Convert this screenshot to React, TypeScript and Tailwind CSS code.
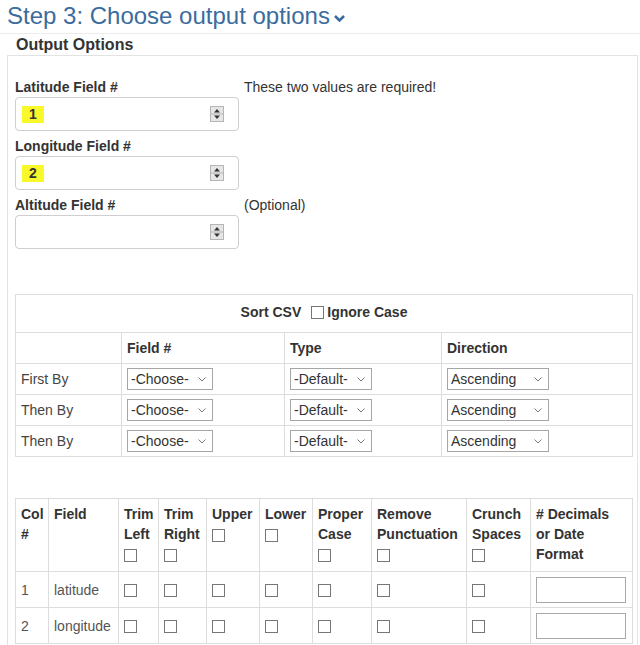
import React from "react";

function Spinner() {
  return (
    <svg width="14" height="16" viewBox="0 0 14 16" className="block">
      <rect x="0.5" y="0.5" width="13" height="15" fill="#e6e6e6" stroke="#b5b5b5" />
      <line x1="1" y1="8" x2="13" y2="8" stroke="#b5b5b5" />
      <polygon points="7,3 10,6.5 4,6.5" fill="#333" />
      <polygon points="7,13 10,9.5 4,9.5" fill="#333" />
    </svg>
  );
}

function NumField({ value }: { value?: string }) {
  return (
    <div className="flex items-center w-[224px] h-[34px] border border-[#cfcfcf] rounded-[4px] bg-white pl-[6px] pr-[14px]">
      <div className="flex-1">
        {value && (
          <span className="inline-block bg-[#f8f82a] px-[7px] leading-[17px] text-[14px] font-bold text-[#333]">
            {value}
          </span>
        )}
      </div>
      <Spinner />
    </div>
  );
}

function Box() {
  return <input type="checkbox" className="appearance-none inline-block align-middle w-[13px] h-[13px] border border-[#767676] bg-white rounded-none m-0" />;
}

function Select({ label, w }: { label: string; w: string }) {
  return (
    <div className={`flex items-center h-[22px] border border-[#a6a6a6] bg-white pl-[3px] pr-[6px] text-[14px] text-[#333] ${w}`}>
      <span className="flex-1 leading-[20px]">{label}</span>
      <svg width="8" height="5" viewBox="0 0 8 5">
        <polyline points="0.5,0.5 4,4 7.5,0.5" fill="none" stroke="#777" strokeWidth="1" />
      </svg>
    </div>
  );
}

const sortRows = ["First By", "Then By", "Then By"];

export default function App() {
  return (
    <div className="w-[640px] h-[645px] overflow-hidden bg-white font-['Liberation_Sans',Arial,sans-serif] text-[14px] text-[#333]">
      <div className="flex items-center pt-[3px] pb-[4px] pl-[7px] border-b border-[#ececec]">
        <span className="text-[24px] leading-[26px] text-[#3b6c9d]">Step 3: Choose output options</span>
        <svg width="13" height="9" viewBox="0 0 13 9" className="ml-[3px] mt-[5px]">
          <polyline points="2,2 6.5,6.5 11,2" fill="none" stroke="#3b6c9d" strokeWidth="2.6" />
        </svg>
      </div>
      <div className="mt-[1px] pl-[16px] text-[16px] leading-[20px] font-bold text-[#333]">Output Options</div>
      <div className="ml-[7px] w-[631px] border border-[#e3e3e3] pl-[7px] pr-[5px] pt-[21px] pb-[6px]">
        <div className="flex flex-col gap-[5px] leading-[20px]">
          <div className="flex">
            <div className="w-[229px]">
              <div className="font-bold">Latitude Field #</div>
              <NumField value="1" />
            </div>
            <div>These two values are required!</div>
          </div>
          <div className="flex">
            <div className="w-[229px]">
              <div className="font-bold">Longitude Field #</div>
              <NumField value="2" />
            </div>
          </div>
          <div className="flex">
            <div className="w-[229px]">
              <div className="font-bold">Altitude Field #</div>
              <NumField />
            </div>
            <div>(Optional)</div>
          </div>
        </div>

        <table className="mt-[45px] w-[617px] table-fixed border-collapse leading-[20px]">
          <colgroup>
            <col className="w-[106px]" />
            <col className="w-[163px]" />
            <col className="w-[157px]" />
            <col className="w-[191px]" />
          </colgroup>
          <tbody>
            <tr className="h-[38px]">
              <td colSpan={4} className="border border-[#dddddd] px-[5px] pb-[3px]">
                <div className="flex items-center justify-center font-bold">
                  <span>Sort CSV</span>
                  <span className="ml-[10px] mr-[3px] flex">
                    <Box />
                  </span>
                  <span>Ignore Case</span>
                </div>
              </td>
            </tr>
            <tr className="h-[31px]">
              <td className="border border-[#dddddd] px-[5px]"></td>
              <td className="border border-[#dddddd] px-[5px] font-bold">Field #</td>
              <td className="border border-[#dddddd] px-[5px] font-bold">Type</td>
              <td className="border border-[#dddddd] px-[5px] font-bold">Direction</td>
            </tr>
            {sortRows.map((r, i) => (
              <tr key={i} className="h-[31px]">
                <td className="border border-[#dddddd] px-[5px] text-[#444]">{r}</td>
                <td className="border border-[#dddddd] px-[5px]">
                  <Select label="-Choose-" w="w-[86px]" />
                </td>
                <td className="border border-[#dddddd] px-[5px]">
                  <Select label="-Default-" w="w-[82px]" />
                </td>
                <td className="border border-[#dddddd] px-[5px]">
                  <Select label="Ascending" w="w-[102px]" />
                </td>
              </tr>
            ))}
          </tbody>
        </table>

        <table className="mt-[41px] w-[617px] table-fixed border-collapse leading-[20px]">
          <colgroup>
            <col className="w-[33px]" />
            <col className="w-[70px]" />
            <col className="w-[40px]" />
            <col className="w-[48px]" />
            <col className="w-[53px]" />
            <col className="w-[53px]" />
            <col className="w-[59px]" />
            <col className="w-[95px]" />
            <col className="w-[64px]" />
            <col className="w-[102px]" />
          </colgroup>
          <thead>
            <tr className="h-[73px] align-top font-bold">
              <th className="border border-[#dddddd] px-[5px] pt-[5px] text-left font-bold">Col<br />#</th>
              <th className="border border-[#dddddd] px-[5px] pt-[5px] text-left font-bold">Field</th>
              <th className="border border-[#dddddd] px-[5px] pt-[5px] text-left font-bold">Trim<br />Left<br /><Box /></th>
              <th className="border border-[#dddddd] px-[5px] pt-[5px] text-left font-bold">Trim<br />Right<br /><Box /></th>
              <th className="border border-[#dddddd] px-[5px] pt-[5px] text-left font-bold">Upper<br /><Box /></th>
              <th className="border border-[#dddddd] px-[5px] pt-[5px] text-left font-bold">Lower<br /><Box /></th>
              <th className="border border-[#dddddd] px-[5px] pt-[5px] text-left font-bold">Proper<br />Case<br /><Box /></th>
              <th className="border border-[#dddddd] px-[5px] pt-[5px] text-left font-bold">Remove<br />Punctuation<br /><Box /></th>
              <th className="border border-[#dddddd] px-[5px] pt-[5px] text-left font-bold">Crunch<br />Spaces<br /><Box /></th>
              <th className="border border-[#dddddd] px-[5px] pt-[5px] text-left font-bold">
                # Decimals<br />or Date<br />Format
              </th>
            </tr>
          </thead>
          <tbody>
            {["latitude", "longitude"].map((f, i) => (
              <tr key={f} className="h-[36px] text-[#555]">
                <td className="border border-[#dddddd] px-[5px]">{i + 1}</td>
                <td className="border border-[#dddddd] px-[5px]">{f}</td>
                {[0, 1, 2, 3, 4, 5, 6].map((k) => (
                  <td key={k} className="border border-[#dddddd] px-[5px]">
                    <Box />
                  </td>
                ))}
                <td className="border border-[#dddddd] px-[5px]">
                  <div className="w-[90px] h-[26px] border border-[#a9a9a9] bg-white" />
                </td>
              </tr>
            ))}
          </tbody>
        </table>
      </div>
    </div>
  );
}
